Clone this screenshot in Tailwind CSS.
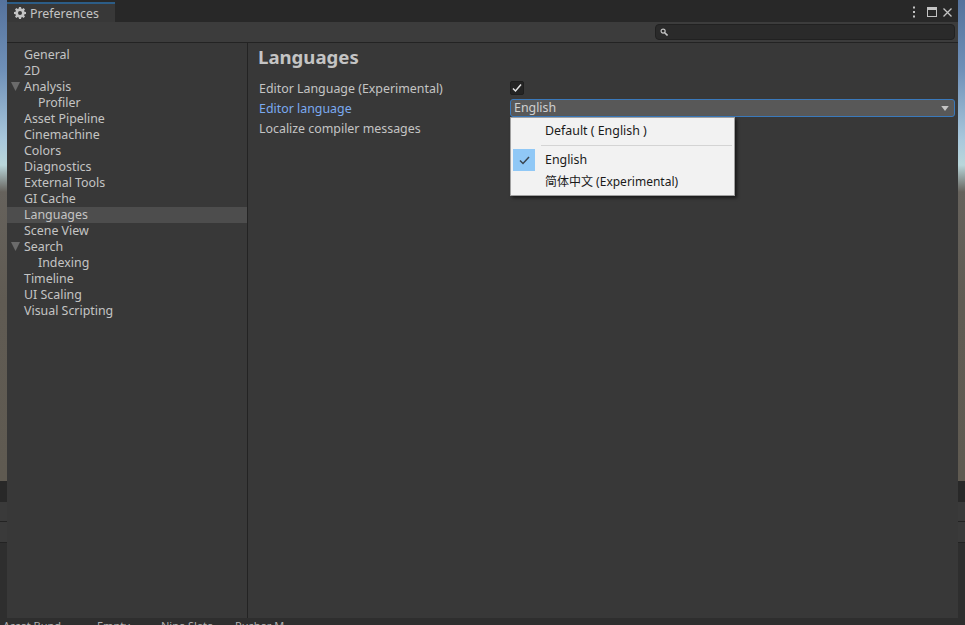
<!DOCTYPE html>
<html lang="en">
<head>
  <meta charset="UTF-8">
  <title>Preferences</title>
  <script src="https://cdn.jsdelivr.net/npm/@tailwindcss/browser@4"></script>
</head>
<body class="relative w-[965px] h-[625px] overflow-hidden bg-[#2d2d2d] font-['Noto_Sans','Noto_Sans_CJK_SC',sans-serif] text-[12.4px] text-[#c4c4c4]">
  <!-- editor behind the window -->
  <div class="absolute inset-0 flex flex-col">
    <div class="h-[481px] bg-[linear-gradient(to_bottom,#55729c_0px,#6f90b8_70px,#a9c8dc_140px,#b9d6da_165px,#66625c_192px,#605b53_300px,#5f5a51_481px)]"></div>
    <div class="h-[21px] bg-[#282828]"></div>
    <div class="h-[20px] bg-[#3a3a3a] border-b border-[#232323]"></div>
    <div class="h-[21px] bg-[#3a3a3a] border-b border-[#232323]"></div>
    <div class="flex-1 bg-[#2e2e2e]"></div>
  </div>
  <div class="absolute left-0 top-[618px] flex text-[#b0b0b0] text-[11px] leading-[16px]">
    <span class="w-[97px] pl-[3px]">Asset Bund</span>
    <span class="w-[64px]">Empty</span>
    <span class="w-[74px]">Nine Slate</span>
    <span>Pusher M</span>
  </div>

  <!-- preferences window -->
  <div class="absolute left-[7px] top-0 w-[951px] h-[618px] flex flex-col bg-[#383838]">
    <div class="h-[22px] flex items-stretch bg-[#282828] pt-[2px]">
      <div class="w-[108px] flex items-center gap-[4px] pl-[7px] bg-[#383838] border-t-2 border-[#2c5d87] text-[#c4c4c4]">
        <svg class="w-[12px] h-[12px]" viewBox="0 0 24 24" fill="#c4c4c4"><path fill-rule="evenodd" d="M10 1h4l.6 3.1 1.9.8L19.2 3 22 5.800l-1.900 2.700.8 1.900L24 11v4l-3.100.6-.8 1.900 1.900 2.700L19.200 23l-2.700-1.900-1.900.8L14 25h-4l-.6-3.100-1.900-.8L4.800 23 2 20.200l1.900-2.700-.8-1.900L0 15v-4l3.100-.6.8-1.900L2 5.800 4.800 3l2.700 1.900 1.900-.8zM12 9a4 4 0 1 0 0 8 4 4 0 0 0 0-8z" transform="translate(0 -1)"/></svg>
        <span class="pt-[2px]">Preferences</span>
      </div>
      <div class="flex-1 flex items-center justify-end gap-[6px] pr-[6px]">
        <svg class="w-[4px] h-[12px] mr-[5px]" viewBox="0 0 4 12" fill="#c4c4c4"><rect x="1" y="0.500" width="2" height="2"/><rect x="1" y="5" width="2" height="2"/><rect x="1" y="9.500" width="2" height="2"/></svg>
        <svg class="w-[10px] h-[10px]" viewBox="0 0 10 10" fill="none" stroke="#c4c4c4"><rect x="0.500" y="0.500" width="9" height="9"/><rect x="0" y="0" width="10" height="3" fill="#c4c4c4" stroke="none"/></svg>
        <svg class="w-[9px] h-[9px]" viewBox="0 0 9 9" fill="none" stroke="#c4c4c4" stroke-width="1.300"><path d="M0.500 0.500l8 8M8.500 0.500l-8 8"/></svg>
      </div>
    </div>
    <div class="h-[21px] flex items-center justify-end pr-[3px] bg-[#3c3c3c] border-b border-[#232323]">
      <div class="w-[300px] h-[16px] flex items-center pl-[4px] rounded-[4px] bg-[#2a2a2a] border border-[#212121]">
        <svg class="w-[8px] h-[8px]" viewBox="0 0 9 9" fill="none" stroke="#c4c4c4" stroke-width="1.300"><circle cx="3.500" cy="3.500" r="2.300"/><path d="M5.300 5.300L8.500 8.500" stroke-width="1.800"/></svg>
      </div>
    </div>
    <div class="flex-1 flex">
      <ul class="w-[241px] border-r border-[#232323] pt-[4px] leading-[16px]">
        <li class="h-[16px] pl-[17px]">General</li>
        <li class="h-[16px] pl-[17px]">2D</li>
        <li class="h-[16px] flex items-start">
          <svg class="w-[17px] h-[9px] mt-[3px] shrink-0" viewBox="0 0 17 9" fill="#6b6b6b"><path d="M4 0h9l-4.500 9z"/></svg>
          <span>Analysis</span>
        </li>
        <li class="h-[16px] pl-[31px]">Profiler</li>
        <li class="h-[16px] pl-[17px]">Asset Pipeline</li>
        <li class="h-[16px] pl-[17px]">Cinemachine</li>
        <li class="h-[16px] pl-[17px]">Colors</li>
        <li class="h-[16px] pl-[17px]">Diagnostics</li>
        <li class="h-[16px] pl-[17px]">External Tools</li>
        <li class="h-[16px] pl-[17px]">GI Cache</li>
        <li class="h-[16px] pl-[17px] bg-[#4d4d4d]">Languages</li>
        <li class="h-[16px] pl-[17px]">Scene View</li>
        <li class="h-[16px] flex items-start">
          <svg class="w-[17px] h-[9px] mt-[3px] shrink-0" viewBox="0 0 17 9" fill="#6b6b6b"><path d="M4 0h9l-4.500 9z"/></svg>
          <span>Search</span>
        </li>
        <li class="h-[16px] pl-[31px]">Indexing</li>
        <li class="h-[16px] pl-[17px]">Timeline</li>
        <li class="h-[16px] pl-[17px]">UI Scaling</li>
        <li class="h-[16px] pl-[17px]">Visual Scripting</li>
      </ul>
      <div class="flex-1 relative pl-[10px] pr-[3px]">
        <h1 class="h-[26px] mt-[1px] text-[18.600px] leading-[26px] font-bold text-[#c4c4c4]">Languages</h1>
        <div class="mt-[8px] h-[20px] flex items-center">
          <span class="w-[252px] pl-[1px] pt-[2px]">Editor Language (Experimental)</span>
          <span class="w-[14px] h-[14px] flex items-center justify-center rounded-[2px] bg-[#242424] border border-[#1e1e1e]">
            <svg class="w-[10px] h-[10px]" viewBox="0 0 10 10" fill="none" stroke="#e4e4e4" stroke-width="1.500"><path d="M1 5.500l2.500 2.500L9 1.500"/></svg>
          </span>
        </div>
        <div class="h-[20px] flex items-center">
          <span class="w-[252px] pl-[1px] pt-[2px] text-[#7baaf0]">Editor language</span>
          <div class="flex-1 h-[18px] flex items-center justify-between px-[3px] rounded-[3px] bg-[#585858] border border-[#3a79bb] text-[#d0d0d0]">
            <span>English</span>
            <svg class="w-[8px] h-[5px] mr-[2px]" viewBox="0 0 9 6" fill="#c4c4c4"><path d="M0 0h9L4.500 6z"/></svg>
          </div>
        </div>
        <div class="h-[20px] flex items-center">
          <span class="pl-[1px] pt-[2px]">Localize compiler messages</span>
        </div>

        <!-- open dropdown menu -->
        <div class="absolute left-[262px] top-[74px] w-[225px] h-[79px] bg-[#f2f2f2] border border-[#a0a0a0] shadow-[2px_2px_3px_rgba(0,0,0,0.55)] text-[#1a1a1a]">
          <div class="h-[26px] pl-[34px] flex items-center">Default ( English )</div>
          <div class="mt-[1px] ml-[30px] mr-[2px] h-px bg-[#d4d4d4]"></div>
          <div class="mt-[3px] h-[22px] flex items-center">
            <span class="ml-[2px] w-[22px] h-[22px] flex items-center justify-center bg-[#90c8f6]">
              <svg class="w-[11px] h-[9px]" viewBox="0 0 11 9" fill="none" stroke="#3a4550" stroke-width="1.500"><path d="M1 4.500l3 3L10 1"/></svg>
            </span>
            <span class="ml-[10px]">English</span>
          </div>
          <div class="h-[22px] pl-[34px] flex items-center text-[12px]">简体中文 (Experimental)</div>
        </div>
      </div>
    </div>
  </div>
</body>
</html>
